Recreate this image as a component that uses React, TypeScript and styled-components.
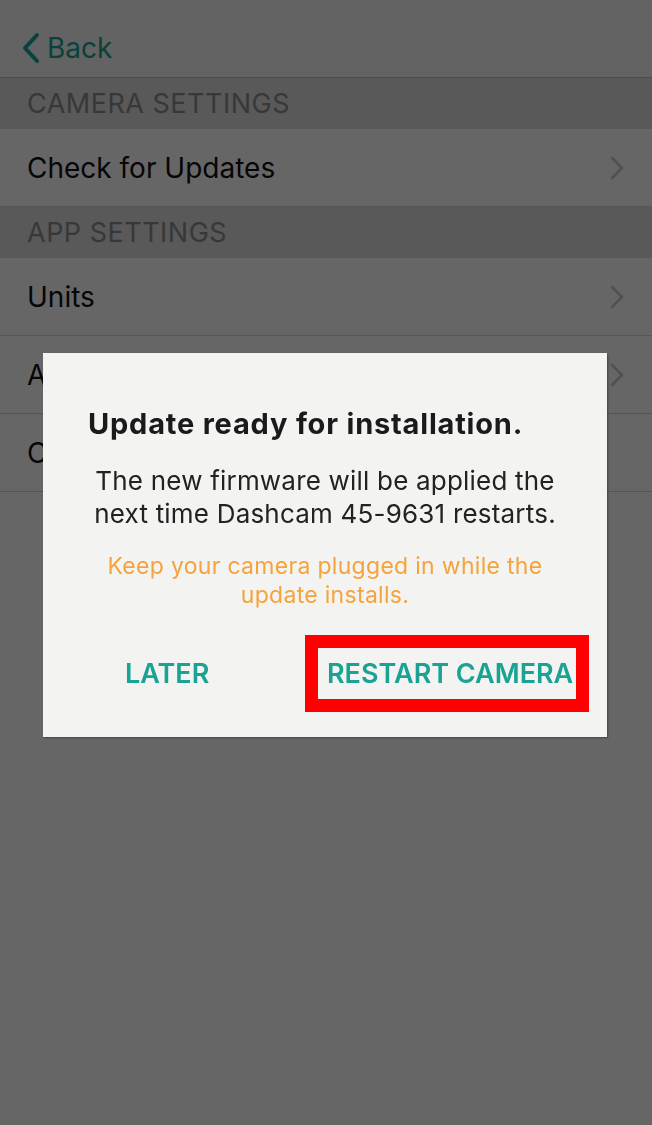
import React from "react";
import styled, { createGlobalStyle } from "styled-components";

const Global = createGlobalStyle`
  html, body { margin: 0; padding: 0; background: #ffffff; }
  body { font-family: Inter, Roboto, "Liberation Sans", Arial, sans-serif; }
  * { box-sizing: border-box; }
`;

const Page = styled.div`
  width: 652px;
  height: 1125px;
  background: #ffffff;
  display: flex;
  flex-direction: column;
  overflow: hidden;
`;

const NavBar = styled.div`
  height: 78px;
  background: #f7f7f7;
  border-bottom: 1px solid #bdbdbd;
  display: flex;
  align-items: center;
  padding: 18px 0 0 20px;
  gap: 5px;
`;

const BackLabel = styled.span`
  font-size: 28px;
  color: #1aa394;
`;

const SectionHeader = styled.div`
  height: 51px;
  background: #dedede;
  display: flex;
  align-items: center;
  padding-left: 27px;
  font-size: 27px;
  letter-spacing: 0.5px;
  color: #8c8c8c;
  text-transform: uppercase;
`;

const Row = styled.div`
  height: 78px;
  background: #ffffff;
  border-bottom: 1px solid #d4d4d4;
  display: flex;
  align-items: center;
  justify-content: space-between;
  padding: 0 28px 0 27px;
  font-size: 28px;
  color: #111111;
`;

const Overlay = styled.div`
  position: fixed;
  inset: 0;
  background: rgba(0, 0, 0, 0.6);
  display: flex;
  flex-direction: column;
  align-items: flex-start;
  padding: 353px 0 0 43px;
`;

const Dialog = styled.div`
  width: 564px;
  background: #f3f3f1;
  box-shadow: 1px 1px 2px rgba(0, 0, 0, 0.35);
  display: flex;
  flex-direction: column;
  padding: 55px 0 25px 0;
`;

const Title = styled.div`
  font-size: 29px;
  line-height: 32px;
  font-weight: 700;
  letter-spacing: 0.8px;
  color: #1a1a1a;
  padding-left: 45px;
  white-space: nowrap;
`;

const Body = styled.div`
  margin-top: 24px;
  font-size: 26px;
  line-height: 33px;
  letter-spacing: 0.2px;
  color: #222222;
  text-align: center;
  white-space: nowrap;
`;

const Warning = styled.div`
  margin-top: 22px;
  font-size: 23px;
  line-height: 29px;
  letter-spacing: 0.3px;
  color: #f5a33a;
  text-align: center;
  white-space: nowrap;
`;

const Actions = styled.div`
  margin-top: 25px;
  display: flex;
  align-items: center;
  justify-content: space-between;
  padding: 0 18px 0 82px;
`;

const ActionButton = styled.button<{ $highlight?: boolean }>`
  font-family: Inter, Roboto, "Liberation Sans", Arial, sans-serif;
  font-size: 27px;
  font-weight: 600;
  color: #1aa394;
  background: #f3f3f1;
  cursor: pointer;
  height: ${(p) => (p.$highlight ? "77px" : "51px")};
  border: ${(p) => (p.$highlight ? "13px solid #ff0000" : "none")};
  padding: ${(p) => (p.$highlight ? "0 2px 0 9px" : "0")};
  width: ${(p) => (p.$highlight ? "284px" : "auto")};
  display: flex;
  align-items: center;
  justify-content: ${(p) => (p.$highlight ? "flex-start" : "center")};
  white-space: nowrap;
`;

const BackChevron = () => (
  <svg width="22" height="32" viewBox="0 0 22 32">
    <path d="M17 3 L5 16 L17 29" fill="none" stroke="#1aa394" strokeWidth="4" strokeLinecap="round" strokeLinejoin="round" />
  </svg>
);

const RowChevron = () => (
  <svg width="14" height="24" viewBox="0 0 14 24">
    <path d="M2 2 L12 12 L2 22" fill="none" stroke="#c7c7cc" strokeWidth="2.5" strokeLinecap="round" strokeLinejoin="round" />
  </svg>
);

export default function App() {
  return (
    <>
      <Global />
      <Page>
        <NavBar>
          <BackChevron />
          <BackLabel>Back</BackLabel>
        </NavBar>
        <SectionHeader>Camera Settings</SectionHeader>
        <Row>
          <span>Check for Updates</span>
          <RowChevron />
        </Row>
        <SectionHeader>App Settings</SectionHeader>
        <Row>
          <span>Units</span>
          <RowChevron />
        </Row>
        <Row>
          <span>About</span>
          <RowChevron />
        </Row>
        <Row>
          <span>Contact Support</span>
        </Row>
      </Page>
      <Overlay>
        <Dialog>
          <Title>Update ready for installation.</Title>
          <Body>
            The new firmware will be applied the
            <br />
            next time Dashcam 45-9631 restarts.
          </Body>
          <Warning>
            Keep your camera plugged in while the
            <br />
            update installs.
          </Warning>
          <Actions>
            <ActionButton>LATER</ActionButton>
            <ActionButton $highlight>RESTART CAMERA</ActionButton>
          </Actions>
        </Dialog>
      </Overlay>
    </>
  );
}
